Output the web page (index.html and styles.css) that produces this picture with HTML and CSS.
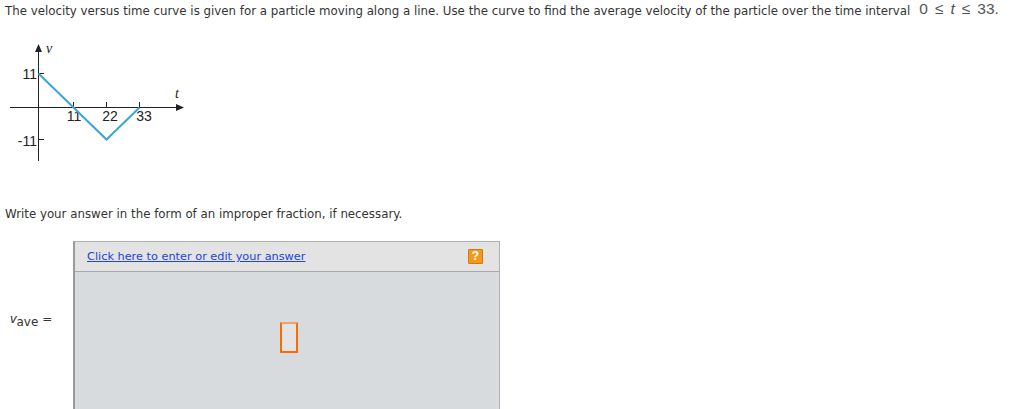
FILE: index.html
```html
<!DOCTYPE html>
<html>
<head>
<meta charset="utf-8">
<link rel="stylesheet" href="styles.css">
</head>
<body>
<div class="question">
  <span class="qtext">The velocity versus time curve is given for a particle moving along a line. Use the curve to find the average velocity of the particle over the time interval</span>
  <span class="math">0<span class="op">≤</span><i class="var">t</i><span class="op">≤</span>33.</span>
</div>
<div class="graph">
  <svg width="200" height="135" viewBox="0 35 200 135" xmlns="http://www.w3.org/2000/svg">
    <g stroke="#222" stroke-width="1" fill="none">
      <line x1="38.5" y1="50" x2="38.5" y2="161"/>
      <line x1="10" y1="107.5" x2="178" y2="107.5"/>
      <line x1="38" y1="73.5" x2="44" y2="73.5"/>
      <line x1="38" y1="139.5" x2="44" y2="139.5"/>
      <line x1="73.5" y1="102" x2="73.5" y2="107"/>
      <line x1="106.5" y1="102" x2="106.5" y2="107"/>
      <line x1="139.5" y1="102" x2="139.5" y2="107"/>
    </g>
    <polygon points="38.5,44 35,52 42,52" fill="#222"/>
    <polygon points="184,107.5 176,104 176,111" fill="#222"/>
    <text x="46" y="53" class="lbl-it">v</text>
    <text x="175" y="98" class="lbl-it">t</text>
    <text x="37" y="79" class="lbl" text-anchor="end">11</text>
    <text x="37" y="146" class="lbl" text-anchor="end">-11</text>
    <text x="74" y="121" class="lbl" text-anchor="middle">11</text>
    <text x="110" y="121" class="lbl" text-anchor="middle">22</text>
    <text x="144" y="121" class="lbl" text-anchor="middle">33</text>
    <polyline points="38.5,73.5 73.5,107.5 106.5,139.5 139.5,107.5" fill="none" stroke="#3ea3da" stroke-width="2" stroke-linejoin="miter"/>
  </svg>
</div>
<p class="instr">Write your answer in the form of an improper fraction, if necessary.</p>
<div class="answer-row">
  <div class="ans-label"><span class="v">v</span><sub>ave</sub> =</div>
  <div class="ans-box">
    <div class="ans-head">
      <a class="edit-link" href="#">Click here to enter or edit your answer</a>
      <span class="help">?</span>
    </div>
    <div class="ans-body">
      <span class="input-slot"></span>
    </div>
  </div>
</div>
</body>
</html>
```
FILE: styles.css
```css
html, body {
  margin: 0;
  padding: 0;
  background: #fff;
}
body {
  font-family: "DejaVu Sans", Verdana, sans-serif;
  font-size: 11.8px;
  color: #333;
  width: 1024px;
  height: 409px;
  overflow: hidden;
}
.question {
  display: flex;
  align-items: flex-start;
  padding: 3px 0 0 5px;
  white-space: nowrap;
}
.qtext {
  padding-top: 1px;
  line-height: 14px;
}
.math {
  font-family: "Liberation Sans", Arial, sans-serif;
  font-size: 15.5px;
  color: #555;
  margin-left: 9px;
  line-height: 16px;
  margin-top: -2px;
}
.math .op {
  margin: 0 7px;
}
.math .var {
  font-style: italic;
}
.graph {
  margin-top: 17px;
  height: 135px;
}
.graph svg {
  display: block;
}
.lbl {
  font-family: "Liberation Sans", Arial, sans-serif;
  font-size: 14px;
  fill: #222;
}
.lbl-it {
  font-family: "Liberation Serif", serif;
  font-style: italic;
  font-size: 14px;
  fill: #222;
}
.instr {
  margin: 37px 0 0 5px;
  line-height: 14px;
}
.answer-row {
  display: flex;
  margin-top: 20px;
}
.ans-label {
  width: 73px;
  padding: 70px 0 0 10px;
  box-sizing: border-box;
  font-size: 12px;
  color: #333;
}
.ans-label .v {
  font-style: italic;
  font-family: "Liberation Sans", Arial, sans-serif;
  font-size: 13px;
}
.ans-label sub {
  font-size: 12px;
  vertical-align: -3px;
}
.ans-box {
  width: 427px;
  height: 180px;
  box-sizing: border-box;
  border: 1px solid #b0b0b0;
  border-left: 2px solid #9a9a9a;
  background: #d7dbde;
}
.ans-head {
  height: 29px;
  background: #e3e3e3;
  border-bottom: 1px solid #a8a8a8;
  display: flex;
  align-items: center;
  justify-content: space-between;
  padding: 0 16px 0 12px;
}
.edit-link {
  color: #2244dd;
  text-decoration: underline;
  font-size: 11.3px;
}
.help {
  width: 15px;
  height: 15px;
  box-sizing: border-box;
  background: #f29a1e;
  border: 1px solid #d07a0a;
  color: #fff;
  font-family: "Liberation Sans", Arial, sans-serif;
  font-weight: bold;
  font-size: 12px;
  line-height: 13px;
  text-align: center;
  border-radius: 1px;
}
.ans-body {
  padding: 50px 0 0 205px;
}
.input-slot {
  display: block;
  width: 18px;
  height: 31px;
  box-sizing: border-box;
  border: 2px solid #ff6a00;
  border-top-color: #f5a070;
  background: #e3e3e3;
}
```
